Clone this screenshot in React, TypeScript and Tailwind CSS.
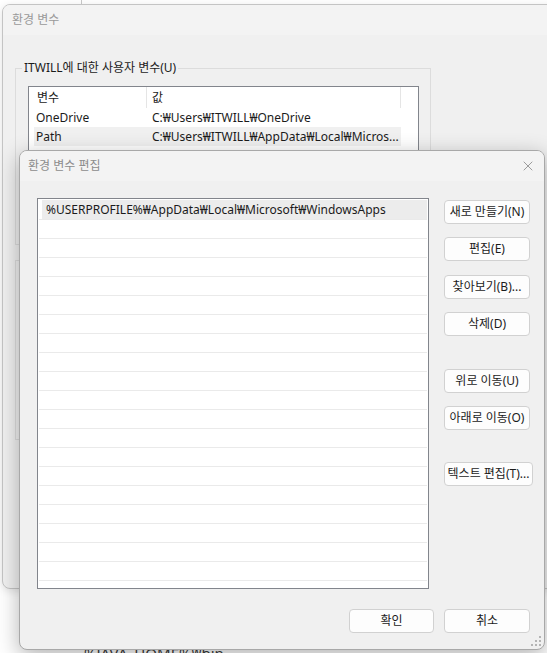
import { X } from "lucide-react";

const pathRows = ["%USERPROFILE%₩AppData₩Local₩Microsoft₩WindowsApps"];
const blankRows = Array.from({ length: 20 }, (_, i) => i);

function DialogButton({ label, className }: { label: string; className: string }) {
  return (
    <button
      className={
        "h-[24px] rounded-[4px] border border-[#d1d1d1] bg-[#fdfdfd] text-[12px] leading-none text-[#1b1b1b] whitespace-nowrap " +
        className
      }
    >
      {label}
    </button>
  );
}

// size grip in the lower right corner of a resizable dialog
function SizeGrip() {
  return (
    <svg width="10" height="10" viewBox="0 0 10 10" className="absolute right-[3px] bottom-[3px]">
      <g fill="#b4b4b4">
        <rect x="8" y="0" width="2" height="2" />
        <rect x="4" y="4" width="2" height="2" />
        <rect x="8" y="4" width="2" height="2" />
        <rect x="0" y="8" width="2" height="2" />
        <rect x="4" y="8" width="2" height="2" />
        <rect x="8" y="8" width="2" height="2" />
      </g>
    </svg>
  );
}

export default function App() {
  return (
    <div className="relative w-[547px] h-[653px] overflow-hidden bg-white text-[#1b1b1b] font-[family-name:'Noto_Sans','Noto_Sans_CJK_KR',sans-serif]">
      {/* desktop behind the dialogs */}
      <div className="absolute left-[81px] top-0 w-px h-[5px] bg-[#c9c9c9]" />
      <div className="absolute left-[84px] top-[644px] text-[15px] leading-[18px] text-[#3a3a3a]">
        %JAVA_HOME%₩bin
      </div>

      {/* 환경 변수 window */}
      <div className="absolute left-[2px] top-[4px] w-[600px] h-[585px] rounded-[8px] border border-[#c4c4c4] bg-[#f0f0f0] overflow-hidden shadow-[0_2px_8px_rgba(0,0,0,0.12)]">
        <div className="h-[30px] bg-[#f3f3f3] flex items-center pl-[9px] text-[12px] text-[#9a9a9a]">
          환경 변수
        </div>
        <div className="pt-[25px] pl-[12px]">
          <fieldset className="w-[416px] h-[185px] border border-[#dcdcdc] pl-[6px] pr-[11px]">
            <legend className="px-[2px] text-[12px] leading-[16px]">ITWILL에 대한 사용자 변수(U)</legend>
            <div className="mt-[10px] ml-[6px] w-[391px] h-[120px] border border-[#82858c] bg-white text-[12px]">
              <div className="flex h-[21px] items-center">
                <div className="w-[118px] h-full pl-[8px] flex items-center border-r border-[#e5e5e5]">변수</div>
                <div className="w-[254px] h-full pl-[5px] flex items-center border-r border-[#e5e5e5]">값</div>
              </div>
              <div className="ml-[5px] w-[367px]">
                <div className="flex h-[19px] items-center">
                  <div className="w-[113px] pl-[2px]">OneDrive</div>
                  <div className="pl-[5px]">C:₩Users₩ITWILL₩OneDrive</div>
                </div>
                <div className="flex h-[19px] items-center bg-[#f0f0f0]">
                  <div className="w-[113px] pl-[2px]">Path</div>
                  <div className="pl-[5px] whitespace-nowrap">C:₩Users₩ITWILL₩AppData₩Local₩Micros...</div>
                </div>
              </div>
            </div>
          </fieldset>
          <fieldset className="mt-[7px] w-[416px] h-[188px] border border-[#dcdcdc] pl-[6px] pr-[11px]">
            <legend className="px-[2px] text-[12px] leading-[16px]">시스템 변수(S)</legend>
          </fieldset>
        </div>
      </div>

      {/* 환경 변수 편집 dialog */}
      <div className="absolute left-[19px] top-[150px] w-[526px] h-[500px] rounded-[8px] border border-[#a8a8a8] bg-[#f0f0f0] overflow-hidden shadow-[0_6px_22px_rgba(0,0,0,0.3)] flex flex-col">
        <div className="h-[30px] shrink-0 bg-[#f3f3f3] flex items-center justify-between pl-[8px] pr-[8px]">
          <span className="text-[12px] text-[#8c8c8c]">환경 변수 편집</span>
          <X size={16} strokeWidth={1} className="text-[#6e6e6e]" />
        </div>
        <div className="flex pl-[17px] pt-[17px]">
          <div className="w-[392px] h-[391px] shrink-0 border border-[#82858c] bg-white overflow-hidden px-[1px] pt-[1px] text-[12px]">
            {pathRows.map((p) => (
              <div key={p} className="h-[19px] ml-[3px] pl-[4px] flex items-center bg-[#ececec] whitespace-nowrap">
                {p}
              </div>
            ))}
            {blankRows.map((i) => (
              <div key={i} className="h-[19px] border-t border-[#eaeaea]" />
            ))}
          </div>
          <div className="ml-[15px] pt-[2px] flex flex-col items-start">
            <DialogButton label="새로 만들기(N)" className="w-[86px]" />
            <DialogButton label="편집(E)" className="w-[86px] mt-[13px]" />
            <DialogButton label="찾아보기(B)..." className="w-[86px] mt-[14px]" />
            <DialogButton label="삭제(D)" className="w-[86px] mt-[13px]" />
            <DialogButton label="위로 이동(U)" className="w-[86px] mt-[33px]" />
            <DialogButton label="아래로 이동(O)" className="w-[86px] mt-[13px]" />
            <DialogButton label="텍스트 편집(T)..." className="w-[89px] mt-[32px]" />
          </div>
        </div>
        <div className="flex justify-end gap-[10px] pr-[14px] mt-[20px]">
          <DialogButton label="확인" className="w-[85px]" />
          <DialogButton label="취소" className="w-[86px]" />
        </div>
        <SizeGrip />
      </div>
    </div>
  );
}
